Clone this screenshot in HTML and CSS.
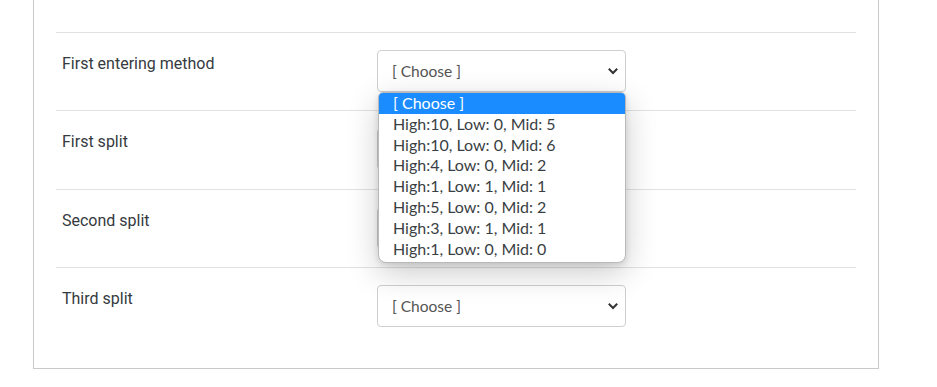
FILE: index.html
```html
<!DOCTYPE html>
<html>
<head>
<meta charset="utf-8">
<link rel="stylesheet" href="styles.css">
</head>
<body>
<div class="card">
  <div class="row">
    <div class="label">First entering method</div>
    <div class="field">
      <div class="select"><span>[ Choose ]</span><svg class="chev" width="12" height="8" viewBox="0 0 12 8"><polyline points="1.8,1.8 6,6 10.2,1.8" fill="none" stroke="#333" stroke-width="2"/></svg></div>
      <ul class="dropdown">
        <li class="active">[ Choose ]</li>
        <li>High:10, Low: 0, Mid: 5</li>
        <li>High:10, Low: 0, Mid: 6</li>
        <li>High:4, Low: 0, Mid: 2</li>
        <li>High:1, Low: 1, Mid: 1</li>
        <li>High:5, Low: 0, Mid: 2</li>
        <li>High:3, Low: 1, Mid: 1</li>
        <li>High:1, Low: 0, Mid: 0</li>
      </ul>
    </div>
  </div>
  <div class="row">
    <div class="label">First split</div>
    <div class="field">
      <div class="select"><span>[ Choose ]</span><svg class="chev" width="12" height="8" viewBox="0 0 12 8"><polyline points="1.8,1.8 6,6 10.2,1.8" fill="none" stroke="#333" stroke-width="2"/></svg></div>
    </div>
  </div>
  <div class="row">
    <div class="label">Second split</div>
    <div class="field">
      <div class="select"><span>[ Choose ]</span><svg class="chev" width="12" height="8" viewBox="0 0 12 8"><polyline points="1.8,1.8 6,6 10.2,1.8" fill="none" stroke="#333" stroke-width="2"/></svg></div>
    </div>
  </div>
  <div class="row">
    <div class="label">Third split</div>
    <div class="field">
      <div class="select"><span>[ Choose ]</span><svg class="chev" width="12" height="8" viewBox="0 0 12 8"><polyline points="1.8,1.8 6,6 10.2,1.8" fill="none" stroke="#333" stroke-width="2"/></svg></div>
    </div>
  </div>
</div>
</body>
</html>
```
FILE: styles.css
```css
html, body {
  margin: 0;
  padding: 0;
  background: #fff;
}
body {
  font-family: Roboto, "Liberation Sans", sans-serif;
  color: #333;
}
.card {
  box-sizing: border-box;
  width: 846px;
  margin-left: 33px;
  padding: 32px 22px 22px;
  border: 1px solid #c9c9c9;
  border-top: none;
  box-shadow: 0 1px 0 #dcdcdc;
  background: #fff;
}
.row {
  display: grid;
  grid-template-columns: 315px 249px;
  height: 78.4px;
  box-sizing: border-box;
  border-top: 1px solid #e2e2e2;
  padding: 17px 0 0 6px;
}
.label {
  font-size: 16px;
  line-height: 22px;
  padding-top: 3px;
  color: #353a40;
}
.field {
  position: relative;
}
.select {
  box-sizing: border-box;
  height: 42px;
  width: 249px;
  border: 1px solid #cfcfcf;
  border-radius: 4px;
  background: #fff;
  display: flex;
  align-items: center;
  justify-content: space-between;
  padding: 0 6px 0 14px;
  font-family: Lato, "Liberation Sans", sans-serif;
  font-size: 15.5px;
  color: #555;
}
.chev {
  display: block;
}
.dropdown {
  position: absolute;
  top: 42px;
  left: 1px;
  width: 248px;
  box-sizing: border-box;
  margin: 0;
  padding: 0 0 3px;
  list-style: none;
  background: #fff;
  border: 1px solid #b9b9b9;
  border-radius: 5px 5px 8px 8px;
  overflow: hidden;
  box-shadow: 0 10px 32px rgba(0, 0, 0, 0.2), 0 2px 6px rgba(0, 0, 0, 0.12);
  z-index: 5;
  font-family: Lato, "Liberation Sans", sans-serif;
  font-size: 16px;
  color: #3a3f44;
}
.dropdown li {
  height: 20.8px;
  line-height: 20.8px;
  padding-left: 14px;
  white-space: nowrap;
}
.dropdown li.active {
  background: #1a8cff;
  color: #fff;
}
```
